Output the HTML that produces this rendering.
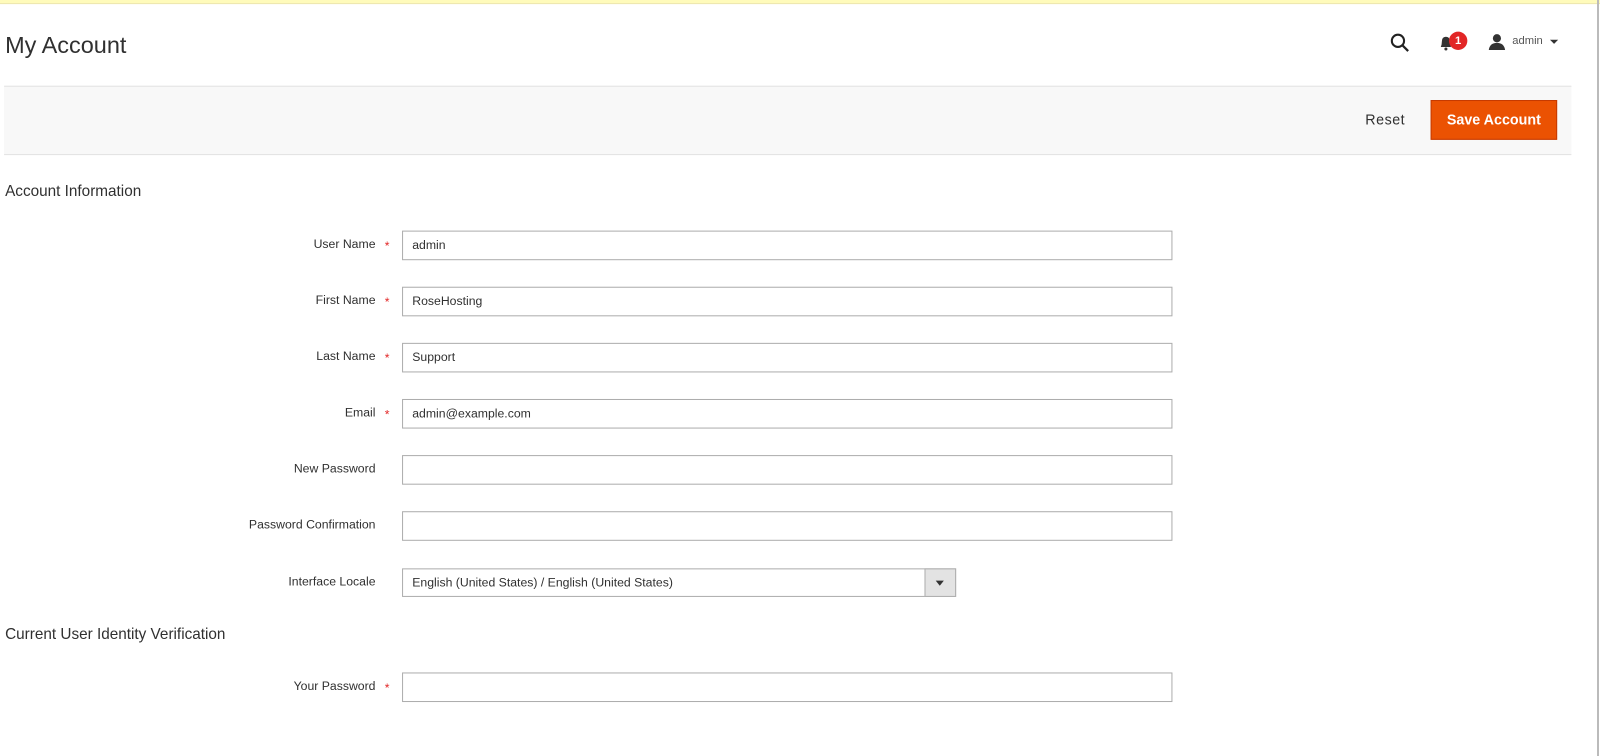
<!DOCTYPE html>
<html><head><meta charset="utf-8"><style>
body{margin:0;width:1600px;height:756px;background:#fff;font-family:"Liberation Sans",sans-serif;color:#303030;position:relative;overflow:hidden}
#w{position:absolute;left:0;top:0;width:1568px;height:741px;transform:scale(1.0204);transform-origin:0 0}
.a{position:absolute}
.lbl{position:absolute;right:1200px;font-size:12px;color:#303030;white-space:nowrap}
.star{position:absolute;left:377px;color:#e22626;font-size:12px}
.in{position:absolute;left:394px;font-size:12px;line-height:27px;padding-left:9px;box-sizing:border-box;width:755px;height:29px;color:#303030;border:1px solid #adadad}
</style></head><body>
<div id="w">
<div class="a" style="left:0;top:0;width:1570px;height:3px;background:#fffbbb;border-bottom:1px solid #ede7b0"></div>
<div class="a" style="left:5px;top:31px;font-size:23px;color:#303030">My Account</div>
<svg class="a" style="left:1362px;top:32px" width="20" height="20" viewBox="0 0 20 20"><circle cx="8" cy="8" r="6" fill="none" stroke="#222" stroke-width="2"/><path d="M12.5 12.5L18 18" stroke="#222" stroke-width="2.2"/></svg>
<svg class="a" style="left:1410px;top:34px" width="14" height="16" viewBox="0 0 14 16"><path d="M2 12Q3 10 3 7Q3 2 7 2Q11 2 11 7Q11 10 12 12Z" fill="#333"/><circle cx="7" cy="14" r="1.5" fill="#333"/></svg>
<div class="a" style="left:1420px;top:31px;width:18px;height:18px;border-radius:50%;background:#e22626;color:#fff;font-size:11px;font-weight:bold;text-align:center;line-height:18px">1</div>
<svg class="a" style="left:1458px;top:32px" width="18" height="18" viewBox="0 0 18 18"><circle cx="9" cy="5.5" r="4" fill="#333"/><path d="M1 17Q2 10 9 10Q16 10 17 17Z" fill="#333"/></svg>
<div class="a" style="left:1482px;top:34px;font-size:11px;color:#555">admin</div>
<div class="a" style="left:1519px;top:39px;border-left:4px solid transparent;border-right:4px solid transparent;border-top:4px solid #333"></div>
<div class="a" style="left:4px;top:84px;width:1536px;height:66px;background:#f8f8f8;border-top:1px solid #e3e3e3;border-bottom:1px solid #e3e3e3"></div>
<div class="a" style="left:1338px;top:109px;font-size:14px;color:#303030;letter-spacing:0.5px">Reset</div>
<div class="a" style="left:1402px;top:98px;width:124px;height:39px;background:#eb5202;border:1px solid #c63a00;box-sizing:border-box;color:#fff;font-size:14px;font-weight:bold;text-align:center;line-height:37px">Save Account</div>
<div class="a" style="left:5px;top:179px;font-size:15px">Account Information</div>
<span class="lbl" style="top:232px">User Name</span><span class="star" style="top:234px">*</span><div class="in" style="top:226px">admin</div>
<span class="lbl" style="top:287px">First Name</span><span class="star" style="top:289px">*</span><div class="in" style="top:281px">RoseHosting</div>
<span class="lbl" style="top:342px">Last Name</span><span class="star" style="top:344px">*</span><div class="in" style="top:336px">Support</div>
<span class="lbl" style="top:397px">Email</span><span class="star" style="top:399px">*</span><div class="in" style="top:391px">admin@example.com</div>
<span class="lbl" style="top:452px">New Password</span><div class="in" style="top:446px"></div>
<span class="lbl" style="top:507px">Password Confirmation</span><div class="in" style="top:501px"></div>
<span class="lbl" style="top:563px">Interface Locale</span>
<div class="in" style="top:557px;width:543px;height:28px;line-height:26px">English (United States) / English (United States)</div>
<div class="a" style="left:906px;top:557px;width:31px;height:28px;background:#e3e3e3;border:1px solid #adadad;box-sizing:border-box"></div>
<div class="a" style="left:917px;top:569px;border-left:4px solid transparent;border-right:4px solid transparent;border-top:5px solid #333"></div>
<div class="a" style="left:5px;top:613px;font-size:15px">Current User Identity Verification</div>
<span class="lbl" style="top:665px">Your Password</span><span class="star" style="top:667px">*</span><div class="in" style="top:659px"></div>
</div>
<div class="a" style="left:1597px;top:0;width:2px;height:756px;background:#bbb"></div>
</body></html>
